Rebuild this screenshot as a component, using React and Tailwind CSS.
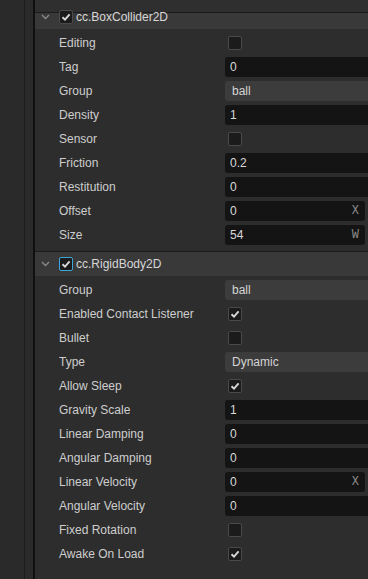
import React from 'react';

const font = { fontFamily: '"Liberation Sans", Arial, sans-serif' };

function Check({ on, blue }) {
  return (
    <div
      className={
        'w-[14px] h-[14px] rounded-[2px] border flex items-center justify-center ' +
        (blue ? 'border-[#3ea6d6] bg-[#1b1b1b]' : 'border-[#4a4a4a] bg-[#1b1b1b]')
      }
    >
      {on && (
        <svg width="10" height="10" viewBox="0 0 10 10">
          <path d="M1.5 5.2 L4 7.6 L8.6 2.4" fill="none" stroke="#d8d8d8" strokeWidth="1.9" />
        </svg>
      )}
    </div>
  );
}

function Chevron() {
  return (
    <svg width="9" height="6" viewBox="0 0 9 6" className="ml-[6px] shrink-0">
      <path d="M1 1 L4.5 4.5 L8 1" fill="none" stroke="#8a8a8a" strokeWidth="1.3" />
    </svg>
  );
}

function Value({ v }) {
  if (v.type === 'check') {
    return (
      <div className="pl-[3px]">
        <Check on={v.on} />
      </div>
    );
  }
  if (v.type === 'select') {
    return (
      <div className="w-[170px] h-5 rounded-[3px] bg-[#3c3c3c] flex items-center px-[7px] text-[#d4d4d4]">
        {v.text}
      </div>
    );
  }
  return (
    <div
      className={
        'h-5 rounded-[3px] bg-[#141414] flex items-center px-[5px] text-[#d8d8d8] ' +
        (v.suffix ? 'w-[140px]' : 'w-[170px]')
      }
    >
      <span className="flex-1">{v.text}</span>
      {v.suffix && (
        <span className="text-[#8a8a8a] text-[12px] pr-[1px]" style={{ fontFamily: '"Liberation Mono", monospace' }}>
          {v.suffix}
        </span>
      )}
    </div>
  );
}

function Row({ label, v }) {
  return (
    <div className="h-6 flex items-center">
      <div className="w-[190px] shrink-0 pl-[24px] text-[#cecece] whitespace-nowrap">{label}</div>
      <div className="shrink-0 w-[180px]">
        <Value v={v} />
      </div>
    </div>
  );
}

const box = [
  ['Editing', { type: 'check', on: false }],
  ['Tag', { type: 'input', text: '0' }],
  ['Group', { type: 'select', text: 'ball' }],
  ['Density', { type: 'input', text: '1' }],
  ['Sensor', { type: 'check', on: false }],
  ['Friction', { type: 'input', text: '0.2' }],
  ['Restitution', { type: 'input', text: '0' }],
  ['Offset', { type: 'input', text: '0', suffix: 'X' }],
  ['Size', { type: 'input', text: '54', suffix: 'W' }],
];

const rigid = [
  ['Group', { type: 'select', text: 'ball' }],
  ['Enabled Contact Listener', { type: 'check', on: true }],
  ['Bullet', { type: 'check', on: false }],
  ['Type', { type: 'select', text: 'Dynamic' }],
  ['Allow Sleep', { type: 'check', on: true }],
  ['Gravity Scale', { type: 'input', text: '1' }],
  ['Linear Damping', { type: 'input', text: '0' }],
  ['Angular Damping', { type: 'input', text: '0' }],
  ['Linear Velocity', { type: 'input', text: '0', suffix: 'X' }],
  ['Angular Velocity', { type: 'input', text: '0' }],
  ['Fixed Rotation', { type: 'check', on: false }],
  ['Awake On Load', { type: 'check', on: true }],
];

export default function App() {
  return (
    <div className="w-[368px] h-[579px] flex bg-[#2a2a2a] overflow-hidden text-[12px]" style={font}>
      <div className="w-[25px] shrink-0 border-r border-[#1c1c1c]" />
      <div className="w-[8px] shrink-0" />
      <div className="w-[2px] shrink-0 bg-[#101010]" />
      <div className="flex-1 min-w-0 bg-[#2d2d2d] overflow-hidden">
        <div className="h-[13px] bg-[#2f2f2f] border-b border-[#1b1b1b]" />
        {/* BoxCollider2D */}
        <div className="relative h-[16px] bg-[#393939] flex items-start">
          <div className="h-[12px] -mt-[2px] flex items-center">
            <Chevron />
            <div className="ml-[9px]">
              <Check on />
            </div>
            <span className="ml-[3px] leading-[12px] text-[#d6d6d6] whitespace-nowrap">cc.BoxCollider2D</span>
          </div>
        </div>
        <div className="pt-[2px] pb-[4px] border-b border-[#1b1b1b]">
          {box.map(([l, v]) => (
            <Row key={l} label={l} v={v} />
          ))}
        </div>
        {/* RigidBody2D */}
        <div className="h-6 bg-[#393939] flex items-center">
          <Chevron />
          <div className="ml-[9px]">
            <Check on blue />
          </div>
          <span className="ml-[3px] text-[#d6d6d6]">cc.RigidBody2D</span>
        </div>
        <div className="pt-[2px]">
          {rigid.map(([l, v]) => (
            <Row key={l + 'r'} label={l} v={v} />
          ))}
        </div>
      </div>
    </div>
  );
}
